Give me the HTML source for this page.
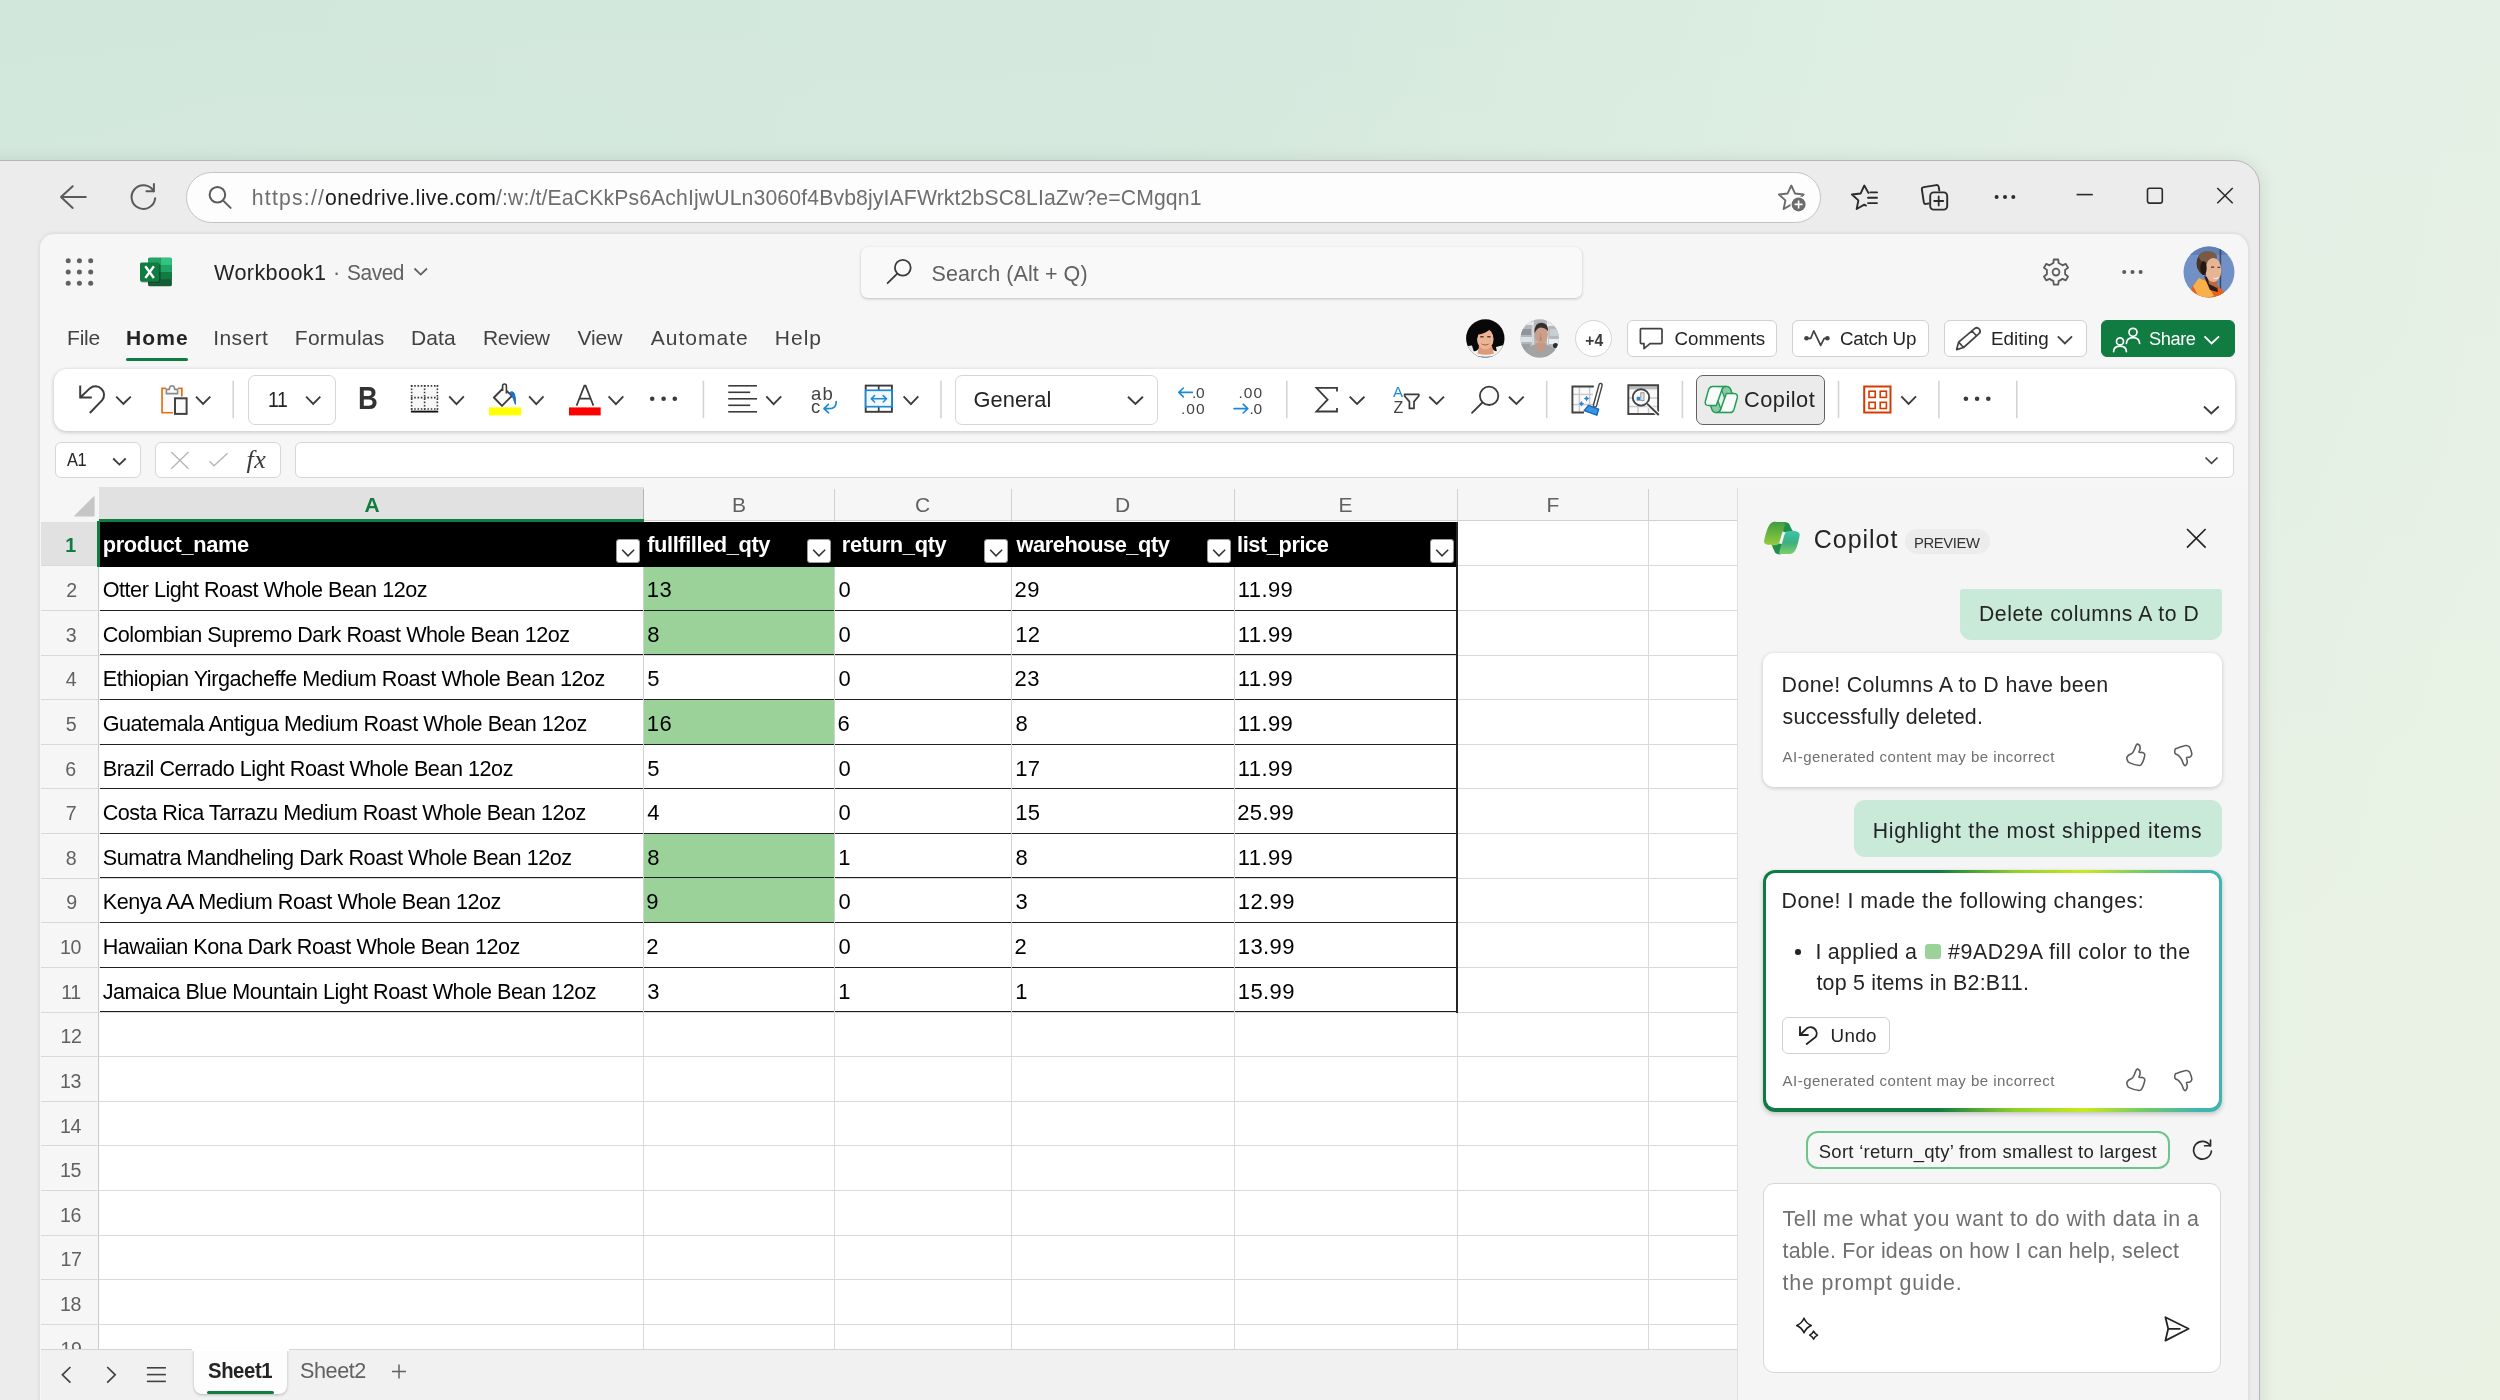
<!DOCTYPE html>
<html lang="en"><head><meta charset="utf-8"><title>Workbook1 - Excel</title><style>
html,body{margin:0;padding:0}
body{width:2500px;height:1400px;overflow:hidden;position:relative;font-family:"Liberation Sans","DejaVu Sans",sans-serif;
background:linear-gradient(180deg,rgba(238,244,226,0) 0%,rgba(238,244,226,.45) 100%),linear-gradient(100deg,#d2e7dc 0%,#d4e8dd 42%,#dcede1 66%,#e4f0e5 88%,#e7f1e6 100%);}
#root{position:absolute;left:0;top:0;width:2500px;height:1400px;will-change:transform}
.b{position:absolute;box-sizing:border-box}
.t{position:absolute;white-space:pre}
</style></head>
<body>
<div id="root">
<div class="b" style="left:-60px;top:160px;width:2320px;height:1320px;background:#ececec;border:1.5px solid #b6b6b6;border-radius:26px;box-shadow:0 2px 18px rgba(0,0,0,.10);"></div>
<div class="b" style="left:186px;top:171.5px;width:1635px;height:51px;background:#fdfdfd;border:1.5px solid #c4c4c4;border-radius:26px;"></div>
<span class="t" style="left:251.80px;top:184.00px;font-size:21.2px;line-height:27px;color:#6e6e6e;letter-spacing:1.213px;">https://</span>
<span class="t" style="left:325.10px;top:184.00px;font-size:21.2px;line-height:27px;color:#1b1b1b;letter-spacing:0.368px;">onedrive.live.com</span>
<span class="t" style="left:496.00px;top:184.00px;font-size:21.2px;line-height:27px;color:#6e6e6e;letter-spacing:0.133px;">/:w:/t/EaCKkPs6AchIjwULn3060f4Bvb8jyIAFWrkt2bSC8LIaZw?e=CMgqn1</span>
<div class="b" style="left:40px;top:234px;width:2207.5px;height:1200px;background:#f6f6f6;border-radius:14px 15px 0 0;box-shadow:0 0 4px rgba(0,0,0,.13);"></div>
<div class="b" style="left:860.5px;top:246.5px;width:721px;height:51px;background:#f9f9f9;border-radius:7px;box-shadow:0 1px 3px rgba(0,0,0,.22);"></div>
<span class="t" style="left:931.60px;top:260.00px;font-size:21.5px;line-height:28px;color:#616161;letter-spacing:0.082px;">Search (Alt + Q)</span>
<span class="t" style="left:214.00px;top:258.00px;font-size:21.6px;line-height:29px;color:#242424;letter-spacing:0.398px;">Workbook1</span>
<span class="t" style="left:333.00px;top:258.00px;font-size:21.6px;line-height:29px;color:#616161;">·</span>
<span class="t" style="left:346.50px;top:258.00px;font-size:21.6px;line-height:29px;color:#616161;letter-spacing:-0.450px;transform:scaleX(0.9672);transform-origin:0 50%;">Saved</span>
<span class="t" style="left:67.10px;top:324.00px;font-size:21px;line-height:27px;color:#424242;letter-spacing:-0.253px;">File</span>
<span class="t" style="left:126.00px;top:324.00px;font-size:21px;line-height:27px;color:#242424;letter-spacing:1.111px;font-weight:700;">Home</span>
<span class="t" style="left:213.20px;top:324.00px;font-size:21px;line-height:27px;color:#424242;letter-spacing:0.443px;">Insert</span>
<span class="t" style="left:294.80px;top:324.00px;font-size:21px;line-height:27px;color:#424242;letter-spacing:0.283px;">Formulas</span>
<span class="t" style="left:411.00px;top:324.00px;font-size:21px;line-height:27px;color:#424242;letter-spacing:0.107px;">Data</span>
<span class="t" style="left:483.10px;top:324.00px;font-size:21px;line-height:27px;color:#424242;letter-spacing:-0.398px;">Review</span>
<span class="t" style="left:577.40px;top:324.00px;font-size:21px;line-height:27px;color:#424242;letter-spacing:-0.057px;">View</span>
<span class="t" style="left:650.80px;top:324.00px;font-size:21px;line-height:27px;color:#424242;letter-spacing:1.013px;">Automate</span>
<span class="t" style="left:774.80px;top:324.00px;font-size:21px;line-height:27px;color:#424242;letter-spacing:0.997px;">Help</span>
<div class="b" style="left:126.2px;top:358px;width:61.6px;height:3.2px;background:#107c41;border-radius:2px;"></div>
<div class="b" style="left:1626.5px;top:320.3px;width:150.70000000000005px;height:37.2px;background:#fff;border:1.7px solid #d1d1d1;border-radius:6px;"></div>
<span class="t" style="left:1674.60px;top:326.00px;font-size:18.8px;line-height:25px;color:#242424;letter-spacing:-0.044px;">Comments</span>
<div class="b" style="left:1792.2px;top:320.3px;width:137.29999999999995px;height:37.2px;background:#fff;border:1.7px solid #d1d1d1;border-radius:6px;"></div>
<span class="t" style="left:1840.00px;top:326.00px;font-size:18.8px;line-height:25px;color:#242424;letter-spacing:-0.278px;">Catch Up</span>
<div class="b" style="left:1943.6px;top:320.3px;width:143.80000000000018px;height:37.2px;background:#fff;border:1.7px solid #d1d1d1;border-radius:6px;"></div>
<span class="t" style="left:1990.90px;top:326.00px;font-size:18.8px;line-height:25px;color:#242424;letter-spacing:0.070px;">Editing</span>
<div class="b" style="left:2100.5px;top:320.3px;width:134.0999999999999px;height:37.2px;background:#107c41;border:1.7px solid #107c41;border-radius:6px;"></div>
<span class="t" style="left:2149.00px;top:326.00px;font-size:18.8px;line-height:25px;color:#fff;letter-spacing:-0.450px;transform:scaleX(0.9713);transform-origin:0 50%;">Share</span>
<div class="b" style="left:1575.2px;top:319.8px;width:37.2px;height:37.2px;background:#fff;border:1.8px solid #d4d4d4;border-radius:50%;"></div>
<span class="t" style="left:1585.30px;top:330.00px;font-size:15.6px;line-height:21px;color:#3b3b3b;letter-spacing:0.093px;font-weight:700;">+4</span>
<div class="b" style="left:54px;top:368.5px;width:2180.5px;height:62.5px;background:#fff;border-radius:13px;box-shadow:0 1px 4px rgba(0,0,0,.22);"></div>
<div class="b" style="left:247.5px;top:374.6px;width:88.2px;height:50px;background:#fff;border:1.7px solid #d6d6d6;border-radius:7px;"></div>
<span class="t" style="left:267.69px;top:386.00px;font-size:21.4px;line-height:28px;color:#242424;letter-spacing:-0.450px;transform:scaleX(0.9064);transform-origin:0 50%;">11</span>
<span class="t" style="left:357.60px;top:379.00px;font-size:30.5px;line-height:38px;color:#333;font-weight:700;transform:scaleX(.9);transform-origin:0 0;">B</span>
<div class="b" style="left:955.4px;top:374.6px;width:202.8px;height:50px;background:#fff;border:1.7px solid #d6d6d6;border-radius:7px;"></div>
<span class="t" style="left:973.60px;top:385.00px;font-size:21.8px;line-height:29px;color:#242424;letter-spacing:0.033px;">General</span>
<div class="b" style="left:1696.2px;top:374.6px;width:128.7px;height:50px;background:#ebebeb;border:1.8px solid #616161;border-radius:7px;"></div>
<span class="t" style="left:1744.00px;top:385.00px;font-size:21.8px;line-height:29px;color:#242424;letter-spacing:0.484px;">Copilot</span>
<span class="t" style="left:811.00px;top:381.00px;font-size:18.5px;line-height:25px;color:#424242;letter-spacing:1.111px;">ab</span>
<span class="t" style="left:811.00px;top:394.00px;font-size:18.5px;line-height:25px;color:#424242;">c</span>
<span class="t" style="left:1192.00px;top:382.00px;font-size:15.5px;line-height:21px;color:#424242;letter-spacing:-0.306px;">.0</span>
<span class="t" style="left:1181.00px;top:398.00px;font-size:15.5px;line-height:21px;color:#424242;letter-spacing:1.037px;">.00</span>
<span class="t" style="left:1238.60px;top:382.00px;font-size:15.5px;line-height:21px;color:#424242;letter-spacing:0.937px;">.00</span>
<span class="t" style="left:1249.40px;top:398.00px;font-size:15.5px;line-height:21px;color:#424242;letter-spacing:-0.306px;">.0</span>
<span class="t" style="left:1392.90px;top:381.00px;font-size:15px;line-height:21px;color:#1e8ad6;">A</span>
<span class="t" style="left:1393.60px;top:397.00px;font-size:16px;line-height:21px;color:#424242;">Z</span>
<div class="b" style="left:54.5px;top:441.8px;width:86px;height:36.7px;background:#fff;border:1.7px solid #d6d6d6;border-radius:6px;"></div>
<span class="t" style="left:67.00px;top:447.00px;font-size:18.4px;line-height:25px;color:#242424;letter-spacing:-0.450px;transform:scaleX(0.8938);transform-origin:0 50%;">A1</span>
<div class="b" style="left:155px;top:441.8px;width:126px;height:36.7px;background:#fff;border:1.7px solid #d6d6d6;border-radius:6px;"></div>
<span class="t" style="left:246.50px;top:443.00px;font-size:26px;line-height:33px;color:#3b3b3b;font-family:'Liberation Serif','DejaVu Serif',serif;font-style:italic;letter-spacing:0.6px;">fx</span>
<div class="b" style="left:295.3px;top:441.8px;width:1939px;height:36.7px;background:#fff;border:1.7px solid #d6d6d6;border-radius:6px;"></div>
<div class="b" style="left:99px;top:521px;width:1638px;height:828px;background:#fff;"></div>
<div class="b" style="left:99px;top:487px;width:544.5px;height:33px;background:#e1e1e1;"></div>
<div class="b" style="left:40.5px;top:521.5px;width:57px;height:44.5px;background:#e1e1e1;"></div>
<div class="b" style="left:642.5px;top:489px;width:1.2px;height:32px;background:#b5b5b5;"></div>
<span class="t" style="left:364.60px;top:491.00px;font-size:21px;line-height:27px;color:#107c41;font-weight:700;">A</span>
<div class="b" style="left:833.5px;top:489px;width:1.2px;height:32px;background:#d0d0d0;"></div>
<span class="t" style="left:732.10px;top:491.00px;font-size:21px;line-height:27px;color:#616161;">B</span>
<div class="b" style="left:1010.5px;top:489px;width:1.2px;height:32px;background:#d0d0d0;"></div>
<span class="t" style="left:915.10px;top:491.00px;font-size:21px;line-height:27px;color:#616161;">C</span>
<div class="b" style="left:1233.5px;top:489px;width:1.2px;height:32px;background:#d0d0d0;"></div>
<span class="t" style="left:1115.10px;top:491.00px;font-size:21px;line-height:27px;color:#616161;">D</span>
<div class="b" style="left:1456.5px;top:489px;width:1.2px;height:32px;background:#d0d0d0;"></div>
<span class="t" style="left:1338.60px;top:491.00px;font-size:21px;line-height:27px;color:#616161;">E</span>
<div class="b" style="left:1647.5px;top:489px;width:1.2px;height:32px;background:#d0d0d0;"></div>
<span class="t" style="left:1546.60px;top:491.00px;font-size:21px;line-height:27px;color:#616161;">F</span>
<div class="b" style="left:1736.5px;top:489px;width:1.2px;height:32px;background:#d0d0d0;"></div>
<div class="b" style="left:643px;top:520.3px;width:1094px;height:1.2px;background:#d0d0d0;"></div>
<svg class="b" style="left:72px;top:494px;" width="24" height="24" viewBox="0 0 24 24" fill="none"><path d="M22.6 3.6 L22.6 21.2 Q22.6 22.6 21.2 22.6 L3.6 22.6 Q1.4 22.6 3 21 L21 3 Q22.6 1.4 22.6 3.6Z" fill="#c6c6c6"/></svg>
<div class="b" style="left:642.6px;top:521px;width:1.3px;height:828px;background:#dadada;"></div>
<div class="b" style="left:833.6px;top:521px;width:1.3px;height:828px;background:#dadada;"></div>
<div class="b" style="left:1010.6px;top:521px;width:1.3px;height:828px;background:#dadada;"></div>
<div class="b" style="left:1233.6px;top:521px;width:1.3px;height:828px;background:#dadada;"></div>
<div class="b" style="left:1456.6px;top:521px;width:1.3px;height:828px;background:#dadada;"></div>
<div class="b" style="left:1647.6px;top:521px;width:1.3px;height:828px;background:#dadada;"></div>
<div class="b" style="left:1736.6px;top:521px;width:1.3px;height:828px;background:#dadada;"></div>
<div class="b" style="left:98px;top:521px;width:1.2px;height:828px;background:#c9c9c9;"></div>
<div class="b" style="left:40.5px;top:565px;width:1696.5px;height:1.4px;background:#d9d9d9;"></div>
<div class="b" style="left:40.5px;top:610px;width:1696.5px;height:1.4px;background:#d9d9d9;"></div>
<div class="b" style="left:40.5px;top:655px;width:1696.5px;height:1.4px;background:#d9d9d9;"></div>
<div class="b" style="left:40.5px;top:699px;width:1696.5px;height:1.4px;background:#d9d9d9;"></div>
<div class="b" style="left:40.5px;top:744px;width:1696.5px;height:1.4px;background:#d9d9d9;"></div>
<div class="b" style="left:40.5px;top:788px;width:1696.5px;height:1.4px;background:#d9d9d9;"></div>
<div class="b" style="left:40.5px;top:833px;width:1696.5px;height:1.4px;background:#d9d9d9;"></div>
<div class="b" style="left:40.5px;top:878px;width:1696.5px;height:1.4px;background:#d9d9d9;"></div>
<div class="b" style="left:40.5px;top:922px;width:1696.5px;height:1.4px;background:#d9d9d9;"></div>
<div class="b" style="left:40.5px;top:967px;width:1696.5px;height:1.4px;background:#d9d9d9;"></div>
<div class="b" style="left:40.5px;top:1012px;width:1696.5px;height:1.4px;background:#d9d9d9;"></div>
<div class="b" style="left:40.5px;top:1056px;width:1696.5px;height:1.4px;background:#d9d9d9;"></div>
<div class="b" style="left:40.5px;top:1101px;width:1696.5px;height:1.4px;background:#d9d9d9;"></div>
<div class="b" style="left:40.5px;top:1145px;width:1696.5px;height:1.4px;background:#d9d9d9;"></div>
<div class="b" style="left:40.5px;top:1190px;width:1696.5px;height:1.4px;background:#d9d9d9;"></div>
<div class="b" style="left:40.5px;top:1235px;width:1696.5px;height:1.4px;background:#d9d9d9;"></div>
<div class="b" style="left:40.5px;top:1279px;width:1696.5px;height:1.4px;background:#d9d9d9;"></div>
<div class="b" style="left:40.5px;top:1324px;width:1696.5px;height:1.4px;background:#d9d9d9;"></div>
<span class="t" style="left:65.20px;top:532.00px;font-size:19.6px;line-height:26px;color:#107c41;font-weight:700;">1</span>
<span class="t" style="left:66.20px;top:577.00px;font-size:19.6px;line-height:26px;color:#616161;">2</span>
<span class="t" style="left:65.70px;top:622.00px;font-size:19.6px;line-height:26px;color:#616161;">3</span>
<span class="t" style="left:65.70px;top:666.00px;font-size:19.6px;line-height:26px;color:#616161;">4</span>
<span class="t" style="left:65.70px;top:711.00px;font-size:19.6px;line-height:26px;color:#616161;">5</span>
<span class="t" style="left:65.20px;top:756.00px;font-size:19.6px;line-height:26px;color:#616161;">6</span>
<span class="t" style="left:65.70px;top:800.00px;font-size:19.6px;line-height:26px;color:#616161;">7</span>
<span class="t" style="left:65.70px;top:845.00px;font-size:19.6px;line-height:26px;color:#616161;">8</span>
<span class="t" style="left:66.20px;top:889.00px;font-size:19.6px;line-height:26px;color:#616161;">9</span>
<span class="t" style="left:60.00px;top:934.00px;font-size:19.6px;line-height:26px;color:#616161;letter-spacing:-0.5px;">10</span>
<span class="t" style="left:61.23px;top:979.00px;font-size:19.6px;line-height:26px;color:#616161;letter-spacing:-0.5px;">11</span>
<span class="t" style="left:60.50px;top:1023.00px;font-size:19.6px;line-height:26px;color:#616161;letter-spacing:-0.5px;">12</span>
<span class="t" style="left:60.00px;top:1068.00px;font-size:19.6px;line-height:26px;color:#616161;letter-spacing:-0.5px;">13</span>
<span class="t" style="left:60.00px;top:1113.00px;font-size:19.6px;line-height:26px;color:#616161;letter-spacing:-0.5px;">14</span>
<span class="t" style="left:60.00px;top:1157.00px;font-size:19.6px;line-height:26px;color:#616161;letter-spacing:-0.5px;">15</span>
<span class="t" style="left:60.00px;top:1202.00px;font-size:19.6px;line-height:26px;color:#616161;letter-spacing:-0.5px;">16</span>
<span class="t" style="left:60.50px;top:1246.00px;font-size:19.6px;line-height:26px;color:#616161;letter-spacing:-0.5px;">17</span>
<span class="t" style="left:60.00px;top:1291.00px;font-size:19.6px;line-height:26px;color:#616161;letter-spacing:-0.5px;">18</span>
<span class="t" style="left:60.50px;top:1336.00px;font-size:19.6px;line-height:26px;color:#616161;letter-spacing:-0.5px;">19</span>
<div class="b" style="left:644px;top:566.2px;width:189.6px;height:44.62px;background:#9ad29a;"></div>
<div class="b" style="left:644px;top:610.8px;width:189.6px;height:44.62px;background:#9ad29a;"></div>
<div class="b" style="left:644px;top:700.1px;width:189.6px;height:44.62px;background:#9ad29a;"></div>
<div class="b" style="left:644px;top:833.9px;width:189.6px;height:44.62px;background:#9ad29a;"></div>
<div class="b" style="left:644px;top:878.6px;width:189.6px;height:44.62px;background:#9ad29a;"></div>
<div class="b" style="left:100px;top:521.6px;width:1358px;height:45px;background:#000;"></div>
<div class="b" style="left:100px;top:610px;width:1358px;height:1.45px;background:#1e1e1e;"></div>
<div class="b" style="left:100px;top:654px;width:1358px;height:1.45px;background:#1e1e1e;"></div>
<div class="b" style="left:100px;top:699px;width:1358px;height:1.45px;background:#1e1e1e;"></div>
<div class="b" style="left:100px;top:744px;width:1358px;height:1.45px;background:#1e1e1e;"></div>
<div class="b" style="left:100px;top:788px;width:1358px;height:1.45px;background:#1e1e1e;"></div>
<div class="b" style="left:100px;top:833px;width:1358px;height:1.45px;background:#1e1e1e;"></div>
<div class="b" style="left:100px;top:877px;width:1358px;height:1.45px;background:#1e1e1e;"></div>
<div class="b" style="left:100px;top:922px;width:1358px;height:1.45px;background:#1e1e1e;"></div>
<div class="b" style="left:100px;top:967px;width:1358px;height:1.45px;background:#1e1e1e;"></div>
<div class="b" style="left:100px;top:1011px;width:1358px;height:1.45px;background:#1e1e1e;"></div>
<div class="b" style="left:1456px;top:522px;width:1.7px;height:490.6px;background:#262626;"></div>
<div class="b" style="left:642.6px;top:567px;width:1.3px;height:446.22px;background:#d2d2d2;"></div>
<div class="b" style="left:833.6px;top:567px;width:1.3px;height:446.22px;background:#d2d2d2;"></div>
<div class="b" style="left:1010.6px;top:567px;width:1.3px;height:446.22px;background:#d2d2d2;"></div>
<div class="b" style="left:1233.6px;top:567px;width:1.3px;height:446.22px;background:#d2d2d2;"></div>
<div class="b" style="left:99px;top:519.2px;width:544.5px;height:3px;background:#107c41;"></div>
<div class="b" style="left:97px;top:521px;width:3.2px;height:45.6px;background:#107c41;"></div>
<span class="t" style="left:102.70px;top:530.00px;font-size:21.8px;line-height:29px;color:#fff;letter-spacing:-0.342px;font-weight:700;">product_name</span>
<span class="t" style="left:647.20px;top:530.00px;font-size:21.8px;line-height:29px;color:#fff;letter-spacing:-0.396px;font-weight:700;">fullfilled_qty</span>
<span class="t" style="left:841.80px;top:530.00px;font-size:21.8px;line-height:29px;color:#fff;letter-spacing:-0.319px;font-weight:700;">return_qty</span>
<span class="t" style="left:1016.60px;top:530.00px;font-size:21.8px;line-height:29px;color:#fff;letter-spacing:-0.455px;font-weight:700;">warehouse_qty</span>
<span class="t" style="left:1237.00px;top:530.00px;font-size:21.8px;line-height:29px;color:#fff;letter-spacing:-0.421px;font-weight:700;">list_price</span>
<span class="t" style="left:102.70px;top:575.00px;font-size:21.6px;line-height:29px;color:#000;letter-spacing:-0.462px;left:102.7px;">Otter Light Roast Whole Bean 12oz</span>
<span class="t" style="left:646.80px;top:575.00px;font-size:22.0px;line-height:29px;color:#000;letter-spacing:0.4px;">13</span>
<span class="t" style="left:838.60px;top:575.00px;font-size:22.0px;line-height:29px;color:#000;letter-spacing:0.4px;">0</span>
<span class="t" style="left:1014.60px;top:575.00px;font-size:22.0px;line-height:29px;color:#000;letter-spacing:0.4px;">29</span>
<span class="t" style="left:1237.80px;top:575.00px;font-size:22.0px;line-height:29px;color:#000;letter-spacing:0.4px;">11.99</span>
<span class="t" style="left:102.70px;top:620.00px;font-size:21.6px;line-height:29px;color:#000;letter-spacing:-0.462px;left:102.7px;">Colombian Supremo Dark Roast Whole Bean 12oz</span>
<span class="t" style="left:647.20px;top:620.00px;font-size:22.0px;line-height:29px;color:#000;letter-spacing:0.4px;">8</span>
<span class="t" style="left:838.60px;top:620.00px;font-size:22.0px;line-height:29px;color:#000;letter-spacing:0.4px;">0</span>
<span class="t" style="left:1015.20px;top:620.00px;font-size:22.0px;line-height:29px;color:#000;letter-spacing:0.4px;">12</span>
<span class="t" style="left:1237.80px;top:620.00px;font-size:22.0px;line-height:29px;color:#000;letter-spacing:0.4px;">11.99</span>
<span class="t" style="left:102.70px;top:664.00px;font-size:21.6px;line-height:29px;color:#000;letter-spacing:-0.462px;left:102.7px;">Ethiopian Yirgacheffe Medium Roast Whole Bean 12oz</span>
<span class="t" style="left:647.20px;top:664.00px;font-size:22.0px;line-height:29px;color:#000;letter-spacing:0.4px;">5</span>
<span class="t" style="left:838.60px;top:664.00px;font-size:22.0px;line-height:29px;color:#000;letter-spacing:0.4px;">0</span>
<span class="t" style="left:1014.60px;top:664.00px;font-size:22.0px;line-height:29px;color:#000;letter-spacing:0.4px;">23</span>
<span class="t" style="left:1237.80px;top:664.00px;font-size:22.0px;line-height:29px;color:#000;letter-spacing:0.4px;">11.99</span>
<span class="t" style="left:102.70px;top:709.00px;font-size:21.6px;line-height:29px;color:#000;letter-spacing:-0.462px;left:102.7px;">Guatemala Antigua Medium Roast Whole Bean 12oz</span>
<span class="t" style="left:646.80px;top:709.00px;font-size:22.0px;line-height:29px;color:#000;letter-spacing:0.4px;">16</span>
<span class="t" style="left:837.60px;top:709.00px;font-size:22.0px;line-height:29px;color:#000;letter-spacing:0.4px;">6</span>
<span class="t" style="left:1015.60px;top:709.00px;font-size:22.0px;line-height:29px;color:#000;letter-spacing:0.4px;">8</span>
<span class="t" style="left:1237.80px;top:709.00px;font-size:22.0px;line-height:29px;color:#000;letter-spacing:0.4px;">11.99</span>
<span class="t" style="left:102.70px;top:754.00px;font-size:21.6px;line-height:29px;color:#000;letter-spacing:-0.462px;left:102.7px;">Brazil Cerrado Light Roast Whole Bean 12oz</span>
<span class="t" style="left:647.20px;top:754.00px;font-size:22.0px;line-height:29px;color:#000;letter-spacing:0.4px;">5</span>
<span class="t" style="left:838.60px;top:754.00px;font-size:22.0px;line-height:29px;color:#000;letter-spacing:0.4px;">0</span>
<span class="t" style="left:1015.20px;top:754.00px;font-size:22.0px;line-height:29px;color:#000;letter-spacing:0.4px;">17</span>
<span class="t" style="left:1237.80px;top:754.00px;font-size:22.0px;line-height:29px;color:#000;letter-spacing:0.4px;">11.99</span>
<span class="t" style="left:102.70px;top:798.00px;font-size:21.6px;line-height:29px;color:#000;letter-spacing:-0.462px;left:102.7px;">Costa Rica Tarrazu Medium Roast Whole Bean 12oz</span>
<span class="t" style="left:647.20px;top:798.00px;font-size:22.0px;line-height:29px;color:#000;letter-spacing:0.4px;">4</span>
<span class="t" style="left:838.60px;top:798.00px;font-size:22.0px;line-height:29px;color:#000;letter-spacing:0.4px;">0</span>
<span class="t" style="left:1015.20px;top:798.00px;font-size:22.0px;line-height:29px;color:#000;letter-spacing:0.4px;">15</span>
<span class="t" style="left:1237.20px;top:798.00px;font-size:22.0px;line-height:29px;color:#000;letter-spacing:0.4px;">25.99</span>
<span class="t" style="left:103.70px;top:843.00px;font-size:21.6px;line-height:29px;color:#000;letter-spacing:-0.462px;left:102.7px;">Sumatra Mandheling Dark Roast Whole Bean 12oz</span>
<span class="t" style="left:647.20px;top:843.00px;font-size:22.0px;line-height:29px;color:#000;letter-spacing:0.4px;">8</span>
<span class="t" style="left:838.20px;top:843.00px;font-size:22.0px;line-height:29px;color:#000;letter-spacing:0.4px;">1</span>
<span class="t" style="left:1015.60px;top:843.00px;font-size:22.0px;line-height:29px;color:#000;letter-spacing:0.4px;">8</span>
<span class="t" style="left:1237.80px;top:843.00px;font-size:22.0px;line-height:29px;color:#000;letter-spacing:0.4px;">11.99</span>
<span class="t" style="left:102.70px;top:887.00px;font-size:21.6px;line-height:29px;color:#000;letter-spacing:-0.462px;left:102.7px;">Kenya AA Medium Roast Whole Bean 12oz</span>
<span class="t" style="left:646.20px;top:887.00px;font-size:22.0px;line-height:29px;color:#000;letter-spacing:0.4px;">9</span>
<span class="t" style="left:838.60px;top:887.00px;font-size:22.0px;line-height:29px;color:#000;letter-spacing:0.4px;">0</span>
<span class="t" style="left:1015.60px;top:887.00px;font-size:22.0px;line-height:29px;color:#000;letter-spacing:0.4px;">3</span>
<span class="t" style="left:1237.80px;top:887.00px;font-size:22.0px;line-height:29px;color:#000;letter-spacing:0.4px;">12.99</span>
<span class="t" style="left:102.70px;top:932.00px;font-size:21.6px;line-height:29px;color:#000;letter-spacing:-0.462px;left:102.7px;">Hawaiian Kona Dark Roast Whole Bean 12oz</span>
<span class="t" style="left:646.20px;top:932.00px;font-size:22.0px;line-height:29px;color:#000;letter-spacing:0.4px;">2</span>
<span class="t" style="left:838.60px;top:932.00px;font-size:22.0px;line-height:29px;color:#000;letter-spacing:0.4px;">0</span>
<span class="t" style="left:1014.60px;top:932.00px;font-size:22.0px;line-height:29px;color:#000;letter-spacing:0.4px;">2</span>
<span class="t" style="left:1237.80px;top:932.00px;font-size:22.0px;line-height:29px;color:#000;letter-spacing:0.4px;">13.99</span>
<span class="t" style="left:103.70px;top:977.00px;font-size:21.6px;line-height:29px;color:#000;letter-spacing:-0.462px;left:102.7px;">Jamaica Blue Mountain Light Roast Whole Bean 12oz</span>
<span class="t" style="left:647.20px;top:977.00px;font-size:22.0px;line-height:29px;color:#000;letter-spacing:0.4px;">3</span>
<span class="t" style="left:838.20px;top:977.00px;font-size:22.0px;line-height:29px;color:#000;letter-spacing:0.4px;">1</span>
<span class="t" style="left:1015.20px;top:977.00px;font-size:22.0px;line-height:29px;color:#000;letter-spacing:0.4px;">1</span>
<span class="t" style="left:1237.80px;top:977.00px;font-size:22.0px;line-height:29px;color:#000;letter-spacing:0.4px;">15.99</span>
<div class="b" style="left:616.2px;top:538.8px;width:24.2px;height:24.4px;background:#fff;border:1px solid #9a9a9a;border-radius:3px;"></div>
<svg class="b" style="left:616.2px;top:538.8px;" width="24.2" height="24.4" viewBox="0 0 24.2 24.4" fill="none"><path d="M6.2 10.8 L12 16.8 L18.2 10.8" stroke="#333" stroke-width="1.6" fill="none"/></svg>
<div class="b" style="left:807.2px;top:538.8px;width:24.2px;height:24.4px;background:#fff;border:1px solid #9a9a9a;border-radius:3px;"></div>
<svg class="b" style="left:807.2px;top:538.8px;" width="24.2" height="24.4" viewBox="0 0 24.2 24.4" fill="none"><path d="M6.2 10.8 L12 16.8 L18.2 10.8" stroke="#333" stroke-width="1.6" fill="none"/></svg>
<div class="b" style="left:984.2px;top:538.8px;width:24.2px;height:24.4px;background:#fff;border:1px solid #9a9a9a;border-radius:3px;"></div>
<svg class="b" style="left:984.2px;top:538.8px;" width="24.2" height="24.4" viewBox="0 0 24.2 24.4" fill="none"><path d="M6.2 10.8 L12 16.8 L18.2 10.8" stroke="#333" stroke-width="1.6" fill="none"/></svg>
<div class="b" style="left:1207.2px;top:538.8px;width:24.2px;height:24.4px;background:#fff;border:1px solid #9a9a9a;border-radius:3px;"></div>
<svg class="b" style="left:1207.2px;top:538.8px;" width="24.2" height="24.4" viewBox="0 0 24.2 24.4" fill="none"><path d="M6.2 10.8 L12 16.8 L18.2 10.8" stroke="#333" stroke-width="1.6" fill="none"/></svg>
<div class="b" style="left:1430.2px;top:538.8px;width:24.2px;height:24.4px;background:#fff;border:1px solid #9a9a9a;border-radius:3px;"></div>
<svg class="b" style="left:1430.2px;top:538.8px;" width="24.2" height="24.4" viewBox="0 0 24.2 24.4" fill="none"><path d="M6.2 10.8 L12 16.8 L18.2 10.8" stroke="#333" stroke-width="1.6" fill="none"/></svg>
<div class="b" style="left:40.5px;top:1349px;width:1696.5px;height:60px;background:#f1f1f1;border-top:1.3px solid #d4d4d4;"></div>
<div class="b" style="left:194px;top:1349px;width:92.5px;height:45px;background:#fdfdfd;border-radius:0 0 8px 8px;box-shadow:0 1px 3px rgba(0,0,0,.25);"></div>
<div class="b" style="left:192px;top:1347.5px;width:97px;height:3px;background:#fff;"></div>
<span class="t" style="left:207.70px;top:1356.00px;font-size:22px;line-height:29px;color:#242424;letter-spacing:-0.450px;font-weight:700;transform:scaleX(0.9231);transform-origin:0 50%;">Sheet1</span>
<div class="b" style="left:207.2px;top:1391px;width:66.8px;height:3px;background:#107c41;border-radius:2px;"></div>
<span class="t" style="left:299.52px;top:1356.00px;font-size:22px;line-height:29px;color:#616161;letter-spacing:-0.450px;transform:scaleX(0.9828);transform-origin:0 50%;">Sheet2</span>
<div class="b" style="left:1737px;top:488px;width:510.5px;height:950px;background:#f5f5f5;border-left:1.3px solid #dedede;"></div>
<span class="t" style="left:1813.80px;top:523.00px;font-size:25px;line-height:32px;color:#242424;letter-spacing:0.971px;">Copilot</span>
<div class="b" style="left:1905px;top:528.5px;width:85px;height:25.5px;background:#ececec;border-radius:13px;"></div>
<span class="t" style="left:1914.00px;top:533.00px;font-size:14.8px;line-height:20px;color:#333;letter-spacing:-0.379px;">PREVIEW</span>
<div class="b" style="left:1960.2px;top:589px;width:261.9px;height:50.8px;background:#c9e9d9;border-radius:3px 3px 11px 11px;"></div>
<span class="t" style="left:1979.00px;top:600.00px;font-size:21.2px;line-height:27px;color:#242424;letter-spacing:0.571px;">Delete columns A to D</span>
<div class="b" style="left:1762.8px;top:653px;width:459.3px;height:133.7px;background:#fff;border-radius:11px;box-shadow:0 1px 4px rgba(0,0,0,.2);"></div>
<span class="t" style="left:1781.60px;top:671.00px;font-size:21.4px;line-height:28px;color:#242424;letter-spacing:0.356px;">Done! Columns A to D have been</span>
<span class="t" style="left:1782.60px;top:703.00px;font-size:21.4px;line-height:28px;color:#242424;letter-spacing:0.144px;">successfully deleted.</span>
<span class="t" style="left:1782.60px;top:746.00px;font-size:15px;line-height:21px;color:#707070;letter-spacing:0.462px;">AI-generated content may be incorrect</span>
<div class="b" style="left:1853.6px;top:799.7px;width:368.5px;height:57.3px;background:#c9e9d9;border-radius:11px;"></div>
<span class="t" style="left:1872.70px;top:817.00px;font-size:21.2px;line-height:27px;color:#242424;letter-spacing:0.729px;">Highlight the most shipped items</span>
<div class="b" style="left:1762.8px;top:869.8px;width:459.3px;height:242px;border-radius:12px;background:linear-gradient(90deg,#0f7b41 0%,#0f7b41 38%,#8fd12a 55%,#c8ea1c 70%,#6cc86e 84%,#3fb5b0 95%);box-shadow:0 2px 5px rgba(0,0,0,.22);"></div>
<div class="b" style="left:1766.2px;top:873.2px;width:452.5px;height:235.2px;border-radius:9px;background:#fff;"></div>
<span class="t" style="left:1781.60px;top:887.00px;font-size:21.4px;line-height:28px;color:#242424;letter-spacing:0.471px;">Done! I made the following changes:</span>
<div class="b" style="left:1795.4px;top:949.2px;width:5.6px;height:5.6px;background:#242424;border-radius:50%;"></div>
<span class="t" style="left:1815.40px;top:938.00px;font-size:21.4px;line-height:28px;color:#242424;letter-spacing:0.278px;">I applied a</span>
<div class="b" style="left:1925.1px;top:943.5px;width:15.8px;height:15.2px;background:#9ad29a;border-radius:3px;"></div>
<span class="t" style="left:1948.00px;top:938.00px;font-size:21.4px;line-height:28px;color:#242424;letter-spacing:0.580px;">#9AD29A fill color to the</span>
<span class="t" style="left:1816.40px;top:969.00px;font-size:21.4px;line-height:28px;color:#242424;letter-spacing:0.232px;">top 5 items in B2:B11.</span>
<div class="b" style="left:1782.3px;top:1016.8px;width:107.3px;height:37.5px;background:#fff;border:1.4px solid #d1d1d1;border-radius:6px;"></div>
<span class="t" style="left:1830.60px;top:1023.00px;font-size:18.8px;line-height:25px;color:#242424;letter-spacing:0.349px;">Undo</span>
<span class="t" style="left:1782.60px;top:1070.00px;font-size:15px;line-height:21px;color:#707070;letter-spacing:0.462px;">AI-generated content may be incorrect</span>
<div class="b" style="left:1806px;top:1131.4px;width:364.4px;height:37.6px;background:#f7f7f7;border:2px solid #6dc58a;border-radius:12px;"></div>
<span class="t" style="left:1818.70px;top:1139.00px;font-size:18.5px;line-height:25px;color:#242424;letter-spacing:0.288px;">Sort ‘return_qty’ from smallest to largest</span>
<div class="b" style="left:1762.8px;top:1182.6px;width:458.4px;height:190px;background:#fff;border:1.8px solid #d6d6d6;border-radius:11px;"></div>
<span class="t" style="left:1782.60px;top:1205.00px;font-size:21.4px;line-height:28px;color:#707070;letter-spacing:0.496px;">Tell me what you want to do with data in a</span>
<span class="t" style="left:1782.60px;top:1237.00px;font-size:21.4px;line-height:28px;color:#707070;letter-spacing:0.181px;">table. For ideas on how I can help, select</span>
<span class="t" style="left:1782.60px;top:1269.00px;font-size:21.4px;line-height:28px;color:#707070;letter-spacing:0.792px;">the prompt guide.</span>
<svg class="b" style="left:0;top:0;pointer-events:none" width="2500" height="1400" viewBox="0 0 2500 1400" fill="none"><path d="M85.8 197.1H61.5M72.7 186.3L61 197.1L72.7 207.9" stroke="#5a5a5a" stroke-width="2" fill="none" stroke-linecap="round" stroke-linejoin="round"/><path d="M155.16 198.13A11.8 11.8 0 1 1 153.62 191.20" stroke="#5a5a5a" stroke-width="2" fill="none" stroke-linecap="round"/><path d="M153.92 184.00V191.20H146.42" stroke="#5a5a5a" stroke-width="2" fill="none" stroke-linecap="round" stroke-linejoin="round"/><circle cx="217.4" cy="194.8" r="7.8" fill="none" stroke="#5a5a5a" stroke-width="2"/><line x1="223.2" y1="200.6" x2="230.6" y2="207.9" stroke="#5a5a5a" stroke-width="2" stroke-linecap="round"/><path d="M1791.30 185.50L1794.94 193.48L1803.66 194.48L1797.20 200.42L1798.94 209.02L1791.30 204.70L1783.66 209.02L1785.40 200.42L1778.94 194.48L1787.66 193.48Z" stroke="#6b6b6b" stroke-width="1.9" fill="none" stroke-linejoin="round"/><circle cx="1798.6" cy="204.4" r="8.2" fill="#fff" stroke="none" stroke-width="0"/><circle cx="1798.6" cy="204.4" r="7" fill="#6b6b6b" stroke="none" stroke-width="0"/><path d="M1794.6 204.4H1802.6M1798.6 200.4V208.4" stroke="#fff" stroke-width="1.6" fill="none" /><path d="M1868.4 192.9L1864.3 185.5L1860.66 193.48L1851.94 194.48L1858.4 200.42L1856.66 209.02L1864.3 204.7L1866 205.6" stroke="#2b2b2b" stroke-width="1.9" fill="none" stroke-linejoin="round" stroke-linecap="round"/><line x1="1870.3" y1="192.4" x2="1877" y2="192.4" stroke="#2b2b2b" stroke-width="1.9" stroke-linecap="round"/><line x1="1868" y1="197.7" x2="1877" y2="197.7" stroke="#2b2b2b" stroke-width="1.9" stroke-linecap="round"/><line x1="1868" y1="203.1" x2="1877" y2="203.1" stroke="#2b2b2b" stroke-width="1.9" stroke-linecap="round"/><path d="M1928.5 203.5L1926.2 203.9Q1924.2 204.2 1923.8 202.2L1921.9 189.5Q1921.6 187.4 1923.7 187.1L1936.2 185.1Q1938.3 184.8 1938.7 186.9L1939.3 190.5" stroke="#2b2b2b" stroke-width="1.9" fill="none" stroke-linecap="round"/><rect x="1930.2" y="192.4" width="17" height="17.2" rx="3.5" fill="#ececec" stroke="#2b2b2b" stroke-width="1.9" /><path d="M1938.7 196.5V205.5M1934.2 201H1943.2" stroke="#2b2b2b" stroke-width="1.8" fill="none" stroke-linecap="round"/><circle cx="1996.6" cy="197.1" r="2" fill="#2b2b2b" stroke="none" stroke-width="0"/><circle cx="2005" cy="197.1" r="2" fill="#2b2b2b" stroke="none" stroke-width="0"/><circle cx="2013.3" cy="197.1" r="2" fill="#2b2b2b" stroke="none" stroke-width="0"/><line x1="2076.6" y1="194.6" x2="2092.8" y2="194.6" stroke="#2b2b2b" stroke-width="1.6" /><rect x="2147.5" y="188.3" width="14.8" height="14.8" rx="2" fill="none" stroke="#2b2b2b" stroke-width="1.6" /><path d="M2217.3 188L2232.7 203.3M2232.7 188L2217.3 203.3" stroke="#2b2b2b" stroke-width="1.6" fill="none" /><circle cx="68.2" cy="260.8" r="2.5" fill="#616161" stroke="none" stroke-width="0"/><circle cx="79.4" cy="260.8" r="2.5" fill="#616161" stroke="none" stroke-width="0"/><circle cx="90.7" cy="260.8" r="2.5" fill="#616161" stroke="none" stroke-width="0"/><circle cx="68.2" cy="272" r="2.5" fill="#616161" stroke="none" stroke-width="0"/><circle cx="79.4" cy="272" r="2.5" fill="#616161" stroke="none" stroke-width="0"/><circle cx="90.7" cy="272" r="2.5" fill="#616161" stroke="none" stroke-width="0"/><circle cx="68.2" cy="283.2" r="2.5" fill="#616161" stroke="none" stroke-width="0"/><circle cx="79.4" cy="283.2" r="2.5" fill="#616161" stroke="none" stroke-width="0"/><circle cx="90.7" cy="283.2" r="2.5" fill="#616161" stroke="none" stroke-width="0"/><rect x="148" y="257.8" width="23.9" height="28.4" rx="1.6" fill="#185c37" stroke="none" stroke-width="0" /><path d="M149.6 257.8H160.8V264.9H148V259.4Q148 257.8 149.6 257.8Z" fill="#21a366"/><path d="M160.8 257.8H170.3Q171.9 257.8 171.9 259.4V264.9H160.8Z" fill="#33c481"/><rect x="148" y="264.9" width="12.8" height="7.1" rx="0" fill="#107c41" stroke="none" stroke-width="0" /><rect x="160.8" y="264.9" width="11.1" height="7.1" rx="0" fill="#21a366" stroke="none" stroke-width="0" /><rect x="148" y="272" width="12.8" height="7.1" rx="0" fill="#185c37" stroke="none" stroke-width="0" /><rect x="160.8" y="272" width="11.1" height="7.1" rx="0" fill="#107c41" stroke="none" stroke-width="0" /><rect x="141" y="263.4" width="19.2" height="19.3" rx="1.6" fill="rgba(0,0,0,.25)" stroke="none" stroke-width="0" /><rect x="140" y="262.4" width="19.2" height="19.3" rx="1.6" fill="#107c41" stroke="none" stroke-width="0" /><path d="M145.3 266.2L153.9 278M153.9 266.2L145.3 278" stroke="#fff" stroke-width="2.3" fill="none" /><path d="M414.5 268.5L420.7 274.6L427 268.5" stroke="#616161" stroke-width="1.8" fill="none" /><circle cx="902.8" cy="267.8" r="7.9" fill="none" stroke="#3b3b3b" stroke-width="1.8"/><line x1="897" y1="273.9" x2="887.6" y2="283.2" stroke="#3b3b3b" stroke-width="1.8" stroke-linecap="round"/><path d="M2053.73 259.50L2058.27 259.50L2058.62 263.07L2062.51 265.32L2065.78 263.84L2068.04 267.76L2065.13 269.86L2065.13 274.34L2068.04 276.44L2065.78 280.36L2062.51 278.88L2058.62 281.13L2058.27 284.70L2053.73 284.70L2053.38 281.13L2049.49 278.88L2046.22 280.36L2043.96 276.44L2046.87 274.34L2046.87 269.86L2043.96 267.76L2046.22 263.84L2049.49 265.32L2053.38 263.07Z" stroke="#5a5a5a" stroke-width="1.8" fill="none" stroke-linejoin="round"/><circle cx="2056" cy="272.1" r="3.4" fill="none" stroke="#5a5a5a" stroke-width="1.8"/><circle cx="2124.2" cy="272" r="2" fill="#5a5a5a" stroke="none" stroke-width="0"/><circle cx="2132.5" cy="272" r="2" fill="#5a5a5a" stroke="none" stroke-width="0"/><circle cx="2140.6" cy="272" r="2" fill="#5a5a5a" stroke="none" stroke-width="0"/><clipPath id="av0"><circle cx="2209" cy="272" r="25.5"/></clipPath><g clip-path="url(#av0)"><rect x="2183" y="246" width="52" height="52" fill="#7090c6"/><rect x="2183" y="246" width="52" height="9" fill="#5f7fb5"/><rect x="2219.6" y="246" width="1.6" height="52" fill="#3b4a6b"/><path d="M2189 298L2193 285L2201 279L2214 282L2224 292L2226 298Z" fill="#e8611a"/><path d="M2193 286L2199 278L2206 281L2214 296L2206 298L2199 297Z" fill="#f9b04a"/><path d="M2204 276L2216 280L2218 292L2210 290Z" fill="#2a1c18"/><path d="M2206 270L2218 274L2217 288L2209 284Z" fill="#b8693f"/><ellipse cx="2206.5" cy="263.5" rx="10" ry="12" fill="#4a3428"/><ellipse cx="2208" cy="257" rx="9" ry="6" fill="#7a5a44"/><ellipse cx="2213.3" cy="270" rx="8" ry="12" fill="#e6b594"/><ellipse cx="2203.5" cy="268" rx="3.2" ry="7" fill="#241814"/><path d="M2212 277.5Q2216 279.5 2219.5 276.5Q2217 281 2212 277.5Z" fill="#fff"/><rect x="2211" y="266.5" width="3.2" height="1.3" fill="#5a3a2a"/><rect x="2217.5" y="266.8" width="2.6" height="1.2" fill="#5a3a2a"/></g><clipPath id="av1"><circle cx="1485.3" cy="338.4" r="19.2"/></clipPath><g clip-path="url(#av1)"><rect x="1465" y="318" width="41" height="41" fill="#080808"/><path d="M1465 346.5L1472 345.5L1474 352L1465 353Z" fill="#e8e8e6"/><path d="M1496 347L1506 344.5V352L1497 352.5Z" fill="#f2f2f0"/><path d="M1465 352.5L1476 351L1480 348H1491L1495 351L1506 352V359H1465Z" fill="#f4f1ee"/><path d="M1479 346L1492 346L1494 353.5Q1485.5 356 1477.5 353.5Z" fill="#dc9a78"/><path d="M1470 354.8Q1485.5 358.5 1501 354.8V356.2Q1485.5 360 1470 356.2Z" fill="#5a70a8"/><ellipse cx="1485.3" cy="339" rx="8.3" ry="10.6" fill="#e9b595"/><path d="M1476.6 341Q1474.5 326 1486 325.5Q1497 326 1494.4 341Q1493.6 333.5 1490 329.5Q1484 334 1478.4 334.5Q1477.2 337.5 1476.6 341Z" fill="#080808"/><path d="M1480.6 343.6Q1485.3 347.4 1490 343.6Q1485.3 345.2 1480.6 343.6Z" fill="#b4553f"/><rect x="1480.2" y="336.2" width="3.4" height="1.2" fill="#3a2018"/><rect x="1487.2" y="336.2" width="3.4" height="1.2" fill="#3a2018"/></g><clipPath id="av2"><circle cx="1539.7" cy="338.4" r="19.2"/></clipPath><g clip-path="url(#av2)"><rect x="1519" y="318" width="42" height="42" fill="#b4b8bb"/><rect x="1520" y="322" width="13" height="3" fill="#e4e7e9"/><rect x="1521" y="329" width="10" height="6" fill="#8e959a"/><rect x="1520" y="337" width="12" height="5" fill="#dde2e6"/><rect x="1521" y="344" width="9" height="7" fill="#9aa0a4"/><rect x="1548" y="321" width="12" height="5" fill="#e6e9eb"/><rect x="1550" y="329" width="10" height="7" fill="#c9ced2"/><rect x="1549" y="339" width="12" height="5" fill="#eceff1"/><circle cx="1555.5" cy="345.5" r="2.6" fill="#2e2e2e"/><rect x="1532.4" y="319" width="1.3" height="34" fill="#e9ecee"/><rect x="1547" y="319" width="1.3" height="30" fill="#e9ecee"/><path d="M1521 359L1524 350L1534 344.5H1547L1555 349L1559 359Z" fill="#a3a3a3"/><path d="M1535.5 343L1546 343L1543 352L1538.5 352Z" fill="#c49882"/><ellipse cx="1541.3" cy="334.5" rx="6.6" ry="9.2" fill="#caa08b"/><path d="M1534.6 333.5Q1533.6 322.6 1541.6 322.8Q1548.6 323.4 1548 331.5Q1546 327.8 1541 327.4Q1536.4 328 1534.6 333.5Z" fill="#35302e"/><path d="M1540.2 332L1542 340.6L1539.6 341Z" fill="#b78670"/></g><path d="M1641.4 328.7H1661Q1662 328.7 1662 329.7V342.6Q1662 343.6 1661 343.6H1650L1644 348.6V343.6H1641.4Q1640.4 343.6 1640.4 342.6V329.7Q1640.4 328.7 1641.4 328.7Z" stroke="#424242" stroke-width="1.7" fill="none" stroke-linejoin="round"/><path d="M1807 338.3L1810.8 338.3L1813.8 330.8L1820.7 345.4L1824.2 338.3L1826.5 338.3" stroke="#424242" stroke-width="1.7" fill="none" stroke-linejoin="round" stroke-linecap="round"/><circle cx="1806.5" cy="338.3" r="2.3" fill="#424242" stroke="none" stroke-width="0"/><circle cx="1827.4" cy="338.3" r="2.3" fill="#424242" stroke="none" stroke-width="0"/><path d="M1956.6 349.6L1958.6 342.2L1974.6 328.6Q1977 326.7 1979.2 329Q1981.3 331.4 1979 333.6L1963.6 347.5Z M1958.6 342.2L1963.6 347.5 M1972 331L1976.6 336" stroke="#424242" stroke-width="1.7" fill="none" stroke-linejoin="round"/><path d="M2057.9 336.3L2064.9 343.5L2072 336.3" stroke="#424242" stroke-width="1.8" fill="none" /><circle cx="2133" cy="332.3" r="4" fill="none" stroke="#fff" stroke-width="1.7"/><path d="M2126.4 343.4Q2126.6 337.6 2133 337.6Q2139.4 337.6 2139.6 343.4" stroke="#fff" stroke-width="1.7" fill="none" stroke-linecap="round"/><circle cx="2120" cy="341.4" r="3.5" fill="none" stroke="#fff" stroke-width="1.7"/><path d="M2113.6 351.6Q2113.8 346.2 2120 346.2Q2126.2 346.2 2126.4 351.6" stroke="#fff" stroke-width="1.7" fill="none" stroke-linecap="round"/><path d="M2204.5 336.3L2211.6 343.5L2219 336.3" stroke="#fff" stroke-width="1.8" fill="none" /><path d="M80.2 385.40V397.6H91.80M80.80 397.00L89.80 388.40A8.60 8.60 0 0 1 102.20 400.20L89.80 413.00" stroke="#3b3b3b" stroke-width="2" fill="none" stroke-linejoin="miter" stroke-linecap="butt"/><path d="M116.2 396.6L123.4 403.8L130.8 396.6" stroke="#3b3b3b" stroke-width="1.9" fill="none" /><path d="M166 388.6H162.2V412.6H173" stroke="#e8710a" stroke-width="2" fill="none" /><path d="M178 388.6H181.7V396.5" stroke="#e8710a" stroke-width="2" fill="none" /><rect x="162.9" y="389.3" width="18" height="22.6" rx="0" fill="#fafafa" stroke="none" stroke-width="0" /><path d="M166.4 393.6V389.4H169.2Q169.6 385.8 172 385.8Q174.4 385.8 174.8 389.4H177.6V393.6Z" stroke="#8a8a8a" stroke-width="1.6" fill="#fafafa" /><rect x="175" y="398.3" width="11.6" height="15.6" rx="0" fill="#fafafa" stroke="#424242" stroke-width="2" /><path d="M196 396.6L203.1 403.8L210.3 396.6" stroke="#3b3b3b" stroke-width="1.9" fill="none" /><line x1="233.2" y1="380.8" x2="233.2" y2="418.2" stroke="#d4d4d4" stroke-width="1.6" /><line x1="703.4" y1="380.8" x2="703.4" y2="418.2" stroke="#d4d4d4" stroke-width="1.6" /><line x1="941" y1="380.8" x2="941" y2="418.2" stroke="#d4d4d4" stroke-width="1.6" /><line x1="1286.8" y1="380.8" x2="1286.8" y2="418.2" stroke="#d4d4d4" stroke-width="1.6" /><line x1="1546.7" y1="380.8" x2="1546.7" y2="418.2" stroke="#d4d4d4" stroke-width="1.6" /><line x1="1682.4" y1="380.8" x2="1682.4" y2="418.2" stroke="#d4d4d4" stroke-width="1.6" /><line x1="1838.5" y1="380.8" x2="1838.5" y2="418.2" stroke="#d4d4d4" stroke-width="1.6" /><line x1="1938.9" y1="380.8" x2="1938.9" y2="418.2" stroke="#d4d4d4" stroke-width="1.6" /><line x1="2016.8" y1="380.8" x2="2016.8" y2="418.2" stroke="#d4d4d4" stroke-width="1.6" /><path d="M306.1 396.6L313.2 403.8L320.3 396.6" stroke="#3b3b3b" stroke-width="1.9" fill="none" /><rect x="411.5" y="386" width="26" height="23" rx="0" fill="#f7f7f7" stroke="none" stroke-width="0" /><line x1="410.9" y1="385.9" x2="438.2" y2="385.9" stroke="#3b3b3b" stroke-width="1.6" stroke-dasharray="1.6 1.7"/><line x1="410.9" y1="397.6" x2="438.2" y2="397.6" stroke="#3b3b3b" stroke-width="1.6" stroke-dasharray="1.6 1.7"/><line x1="410.9" y1="409.0" x2="438.2" y2="409.0" stroke="#3b3b3b" stroke-width="1.6" stroke-dasharray="1.6 1.7"/><line x1="411.6" y1="385.1" x2="411.6" y2="409.8" stroke="#3b3b3b" stroke-width="1.6" stroke-dasharray="1.6 1.7"/><line x1="424.6" y1="385.1" x2="424.6" y2="409.8" stroke="#3b3b3b" stroke-width="1.6" stroke-dasharray="1.6 1.7"/><line x1="437.4" y1="385.1" x2="437.4" y2="409.8" stroke="#3b3b3b" stroke-width="1.6" stroke-dasharray="1.6 1.7"/><line x1="410.9" y1="411.6" x2="438.2" y2="411.6" stroke="#111" stroke-width="1.9" /><path d="M449.2 396.4L456.5 404.1L463.8 396.4" stroke="#3b3b3b" stroke-width="1.9" fill="none" /><path d="M493.9 397.5L503.4 388L512 395.8L502 405.8Z" stroke="#3b3b3b" stroke-width="1.8" fill="#fafafa" stroke-linejoin="round"/><path d="M502.6 391V386Q502.6 384 504.5 384Q506.4 384 506.4 386V393.5" stroke="#3b3b3b" stroke-width="1.6" fill="#fff" /><path d="M509.4 392.6Q512.5 390.6 514 393Q516 397 515.4 404.4Q513.5 399 512.4 396.4Q511.4 394.2 509.4 392.6Z" stroke="#1e6fc8" stroke-width="1" fill="#1e6fc8" /><rect x="489" y="407.4" width="32.2" height="8" rx="0" fill="#ffff00" stroke="none" stroke-width="0" /><path d="M529.1 396.4L536.3 404.1L543.5 396.4" stroke="#3b3b3b" stroke-width="1.9" fill="none" /><path d="M576.6 405.6L584.4 385.6H585.6L593.4 405.6M579.3 398.6H590.7" stroke="#3b3b3b" stroke-width="1.7" fill="none" /><rect x="569" y="407.4" width="31.7" height="8" rx="0" fill="#ff0000" stroke="none" stroke-width="0" /><path d="M608.6 396.4L615.9 404.1L623.3 396.4" stroke="#3b3b3b" stroke-width="1.9" fill="none" /><circle cx="652.2" cy="398.8" r="2.3" fill="#3b3b3b" stroke="none" stroke-width="0"/><circle cx="663.6" cy="398.8" r="2.3" fill="#3b3b3b" stroke="none" stroke-width="0"/><circle cx="674.8" cy="398.8" r="2.3" fill="#3b3b3b" stroke="none" stroke-width="0"/><line x1="728.2" y1="385.8" x2="757" y2="385.8" stroke="#3b3b3b" stroke-width="1.6" /><line x1="728.2" y1="392.3" x2="750.2" y2="392.3" stroke="#3b3b3b" stroke-width="1.6" /><line x1="728.2" y1="398.8" x2="757" y2="398.8" stroke="#3b3b3b" stroke-width="1.6" /><line x1="728.2" y1="405.3" x2="750.2" y2="405.3" stroke="#3b3b3b" stroke-width="1.6" /><line x1="728.2" y1="411.8" x2="757" y2="411.8" stroke="#3b3b3b" stroke-width="1.6" /><path d="M766.3 396.4L773.6 404.1L781.2 396.4" stroke="#3b3b3b" stroke-width="1.9" fill="none" /><path d="M836.2 401.6Q836.6 408.6 829 408.6H824.4M828.4 404.4L824 408.6L828.6 412.8" stroke="#1e8ad6" stroke-width="1.7" fill="none" stroke-linecap="round" stroke-linejoin="round"/><rect x="865.7" y="385.6" width="26.2" height="26.2" rx="0" fill="none" stroke="#3b3b3b" stroke-width="1.9" /><line x1="878.7" y1="385.6" x2="878.7" y2="411.8" stroke="#3b3b3b" stroke-width="1.7" /><rect x="865.7" y="390.3" width="26.2" height="16.4" rx="0" fill="#f3f8fd" stroke="#1e8ad6" stroke-width="1.7" /><path d="M871.4 398.8H886.4M874.6 395.6L871.2 398.8L874.6 402M883.2 395.6L886.6 398.8L883.2 402" stroke="#1e8ad6" stroke-width="1.5" fill="none" stroke-linecap="round" stroke-linejoin="round"/><path d="M903.6 396.4L910.9 404.1L918.3 396.4" stroke="#3b3b3b" stroke-width="1.9" fill="none" /><path d="M1128 396.7L1135.4 404L1142.9 396.7" stroke="#3b3b3b" stroke-width="1.9" fill="none" /><path d="M1192.4 392.4H1179M1183.4 388L1178.8 392.4L1183.4 396.8" stroke="#1e8ad6" stroke-width="1.6" fill="none" stroke-linecap="round" stroke-linejoin="round"/><path d="M1234 408.6H1247.6M1243.2 404.2L1247.8 408.6L1243.2 413" stroke="#1e8ad6" stroke-width="1.6" fill="none" stroke-linecap="round" stroke-linejoin="round"/><path d="M1337 391.4V387.9H1316.4L1327.6 399.7L1316.4 411.5H1337V408" stroke="#3b3b3b" stroke-width="1.8" fill="none" stroke-linejoin="miter"/><path d="M1349.7 396.7L1357 404L1364.4 396.7" stroke="#3b3b3b" stroke-width="1.9" fill="none" /><path d="M1404.6 394.4H1418.8V396L1414 401.6V408.4H1409.4V401.6L1404.6 396Z" stroke="#3b3b3b" stroke-width="1.7" fill="#fafafa" stroke-linejoin="round"/><path d="M1429.3 396.7L1436.7 404L1444 396.7" stroke="#3b3b3b" stroke-width="1.9" fill="none" /><circle cx="1489.1" cy="395.8" r="9.2" fill="#fafafa" stroke="#3b3b3b" stroke-width="1.8"/><line x1="1482.4" y1="402.5" x2="1472" y2="412.9" stroke="#3b3b3b" stroke-width="1.8" stroke-linecap="round"/><path d="M1509 396.7L1516.4 404L1523.7 396.7" stroke="#3b3b3b" stroke-width="1.9" fill="none" /><rect x="1572.4" y="386.5" width="20.4" height="26" rx="0" fill="#fafafa" stroke="none" stroke-width="0" /><line x1="1579.4" y1="386.5" x2="1579.4" y2="412.5" stroke="#c8c8c8" stroke-width="1.4" /><line x1="1589.6" y1="386.5" x2="1589.6" y2="412.5" stroke="#c8c8c8" stroke-width="1.4" /><line x1="1572.4" y1="394.4" x2="1593" y2="394.4" stroke="#c8c8c8" stroke-width="1.4" /><line x1="1572.4" y1="404.6" x2="1593" y2="404.6" stroke="#c8c8c8" stroke-width="1.4" /><path d="M1593.8 386.5H1572.4V412.5H1584" stroke="#424242" stroke-width="1.9" fill="none" /><path d="M1600.6 385L1595 405.4" stroke="#424242" stroke-width="4.6" fill="none" stroke-linecap="round"/><path d="M1600.6 385L1595 405.4" stroke="#fff" stroke-width="1.8" fill="none" stroke-linecap="round"/><path d="M1588.4 405.4L1598.6 409.2L1596.8 415.2L1584.2 410.6Z" stroke="#1565c0" stroke-width="1.4" fill="#3a96dd" stroke-linejoin="round"/><path d="M1586.6 395.8Q1587.384 397.81600000000003 1589.3999999999999 398.6Q1587.384 399.384 1586.6 401.40000000000003Q1585.8159999999998 399.384 1583.8 398.6Q1585.8159999999998 397.81600000000003 1586.6 395.8Z" fill="#2b88d8"/><path d="M1581.4 401.0Q1582.1840000000002 403.016 1584.2 403.8Q1582.1840000000002 404.584 1581.4 406.6Q1580.616 404.584 1578.6000000000001 403.8Q1580.616 403.016 1581.4 401.0Z" fill="#2b88d8"/><rect x="1628.3" y="385.2" width="29.8" height="28.8" rx="0" fill="#fafafa" stroke="none" stroke-width="0" /><rect x="1628.3" y="385.2" width="29.8" height="4.2" rx="0" fill="#bdbdbd" stroke="none" stroke-width="0" /><line x1="1628.3" y1="398" x2="1658" y2="398" stroke="#c8c8c8" stroke-width="1.4" /><line x1="1628.3" y1="406.5" x2="1658" y2="406.5" stroke="#c8c8c8" stroke-width="1.4" /><line x1="1638" y1="404" x2="1638" y2="414" stroke="#c8c8c8" stroke-width="1.4" /><line x1="1648.5" y1="404" x2="1648.5" y2="414" stroke="#c8c8c8" stroke-width="1.4" /><rect x="1628.3" y="385.2" width="29.8" height="28.8" rx="0" fill="none" stroke="#424242" stroke-width="1.9" /><circle cx="1641" cy="397.4" r="8.2" fill="#fff" stroke="#424242" stroke-width="1.9"/><rect x="1636.6" y="396.8" width="3.4" height="3.8" rx="0" fill="#2b88d8" stroke="none" stroke-width="0" /><rect x="1640.8" y="392.8" width="3.2" height="7.8" rx="0" fill="#e6e6e6" stroke="#8a8a8a" stroke-width="0.9" /><path d="M1647 403.6L1658.8 415" stroke="#fafafa" stroke-width="4.4" fill="none" /><path d="M1647 403.6L1658.8 415" stroke="#424242" stroke-width="2" fill="none" /><path d="M1712.6 386.4H1725.8Q1729.6 386.4 1730.8 390L1732 393.6 M1712.6 386.4Q1709.6 386.6 1708.6 389.6L1705.4 401Q1704.4 405.4 1708.6 405.6H1716.4L1721.6 390.4Q1722.8 386.6 1725.8 386.4" stroke="#1f9d55" stroke-width="1.5" fill="#fafafa" stroke-linejoin="round"/><path d="M1730 412.6H1716.8Q1713 412.6 1711.8 409L1710.8 405.6 M1730 412.6Q1733 412.4 1734 409.4L1737.2 398Q1738.2 393.6 1734 393.4H1726.2L1721 408.6Q1719.8 412.4 1716.8 412.6" stroke="#1f9d55" stroke-width="1.5" fill="#fafafa" stroke-linejoin="round"/><path d="M1721.8 390.2Q1723 386.6 1725.8 386.4Q1729.6 386.4 1730.8 390L1732 393.4H1726.2L1724.6 398Z" stroke="#1f9d55" stroke-width="1.2" fill="#8cc9a5" stroke-linejoin="round"/><path d="M1720.8 408.8Q1719.6 412.4 1716.8 412.6Q1713 412.6 1711.8 409L1710.8 405.6H1716.4L1718 401Z" stroke="#1f9d55" stroke-width="1.2" fill="#8cc9a5" stroke-linejoin="round"/><rect x="1864.2" y="386.5" width="26.3" height="26" rx="0" fill="none" stroke="#d83b01" stroke-width="2" /><rect x="1869" y="391.2" width="6.2" height="6.2" rx="0" fill="none" stroke="#d83b01" stroke-width="1.6" /><rect x="1869" y="402.3" width="6.2" height="6.2" rx="0" fill="none" stroke="#d83b01" stroke-width="1.6" /><rect x="1880.2" y="391.2" width="6.2" height="6.2" rx="0" fill="none" stroke="#d83b01" stroke-width="1.6" /><rect x="1880.2" y="402.3" width="6.2" height="6.2" rx="0" fill="none" stroke="#d83b01" stroke-width="1.6" /><path d="M1901.3 396.4L1908.6 404L1916 396.4" stroke="#3b3b3b" stroke-width="1.9" fill="none" /><circle cx="1965.9" cy="398.8" r="2.3" fill="#3b3b3b" stroke="none" stroke-width="0"/><circle cx="1977.1" cy="398.8" r="2.3" fill="#3b3b3b" stroke="none" stroke-width="0"/><circle cx="1988.3" cy="398.8" r="2.3" fill="#3b3b3b" stroke="none" stroke-width="0"/><path d="M2204 406.5L2211.3 413.4L2218.7 406.5" stroke="#3b3b3b" stroke-width="1.9" fill="none" /><path d="M113.2 458.5L119.4 464.6L125.7 458.5" stroke="#3b3b3b" stroke-width="1.8" fill="none" /><path d="M171.3 452L188.5 468.8M188.5 452L171.3 468.8" stroke="#b5b5b5" stroke-width="1.3" fill="none" /><path d="M209.5 461.2L214 465.8L227.5 453.2" stroke="#b5b5b5" stroke-width="1.3" fill="none" /><path d="M2205.5 457.5L2211.5 463.3L2217.5 457.5" stroke="#424242" stroke-width="1.7" fill="none" /><path d="M70.4 1367L62.4 1374.8L70.4 1382.7" stroke="#424242" stroke-width="1.7" fill="none" /><path d="M107.2 1367L115.2 1374.8L107.2 1382.7" stroke="#424242" stroke-width="1.7" fill="none" /><line x1="146.9" y1="1367.8" x2="165.9" y2="1367.8" stroke="#424242" stroke-width="1.6" /><line x1="146.9" y1="1374.6" x2="165.9" y2="1374.6" stroke="#424242" stroke-width="1.6" /><line x1="146.9" y1="1381.4" x2="165.9" y2="1381.4" stroke="#424242" stroke-width="1.6" /><path d="M392 1371.5H406M399 1364.5V1378.5" stroke="#616161" stroke-width="1.5" fill="none" /><defs><linearGradient id="cg1" x1="0" y1="0" x2="0" y2="1"><stop offset="0" stop-color="#3e9d42"/><stop offset="1" stop-color="#96cc3e"/></linearGradient><linearGradient id="cg2" x1="0" y1="0" x2="0" y2="1"><stop offset="0" stop-color="#3cc6ad"/><stop offset="0.5" stop-color="#3fae80"/><stop offset="1" stop-color="#7fcf6a"/></linearGradient></defs><path d="M1783.00 522.20C1784.08 521.40 1787.17 522.23 1788.50 523.20C1789.83 524.17 1790.33 526.53 1791.00 528.00C1791.67 529.47 1793.67 531.33 1792.50 532.00C1791.33 532.67 1785.75 532.67 1784.00 532.00C1782.25 531.33 1782.17 529.63 1782.00 528.00C1781.83 526.37 1781.92 523.00 1783.00 522.20Z" fill="#1f8f4d"/><path d="M1772.50 544.20C1773.83 543.23 1780.25 543.40 1782.00 544.20C1783.75 545.00 1783.17 547.37 1783.00 549.00C1782.83 550.63 1782.13 553.23 1781.00 554.00C1779.87 554.77 1777.37 554.27 1776.20 553.60C1775.03 552.93 1774.62 551.57 1774.00 550.00C1773.38 548.43 1771.17 545.17 1772.50 544.20Z" fill="#1f8f4d"/><path d="M1772.50 522.20C1774.50 521.28 1777.92 521.93 1780.00 522.00C1782.08 522.07 1784.25 521.85 1785.00 522.60C1785.75 523.35 1785.08 524.43 1784.50 526.50C1783.92 528.57 1782.42 532.25 1781.50 535.00C1780.58 537.75 1779.88 541.33 1779.00 543.00C1778.12 544.67 1778.03 544.70 1776.20 545.00C1774.37 545.30 1770.00 545.22 1768.00 544.80C1766.00 544.38 1764.70 543.80 1764.20 542.50C1763.70 541.20 1764.37 539.50 1765.00 537.00C1765.63 534.50 1766.75 529.97 1768.00 527.50C1769.25 525.03 1770.50 523.12 1772.50 522.20Z" fill="url(#cg1)"/><path d="M1788.00 531.20C1789.83 530.82 1794.08 530.73 1796.00 531.20C1797.92 531.67 1799.03 532.62 1799.50 534.00C1799.97 535.38 1799.38 537.00 1798.80 539.50C1798.22 542.00 1797.13 546.65 1796.00 549.00C1794.87 551.35 1794.00 552.77 1792.00 553.60C1790.00 554.43 1786.08 553.97 1784.00 554.00C1781.92 554.03 1780.17 554.55 1779.50 553.80C1778.83 553.05 1779.42 551.80 1780.00 549.50C1780.58 547.20 1782.17 542.67 1783.00 540.00C1783.83 537.33 1784.17 534.97 1785.00 533.50C1785.83 532.03 1786.17 531.58 1788.00 531.20Z" fill="url(#cg2)"/><path d="M2187 529L2205.6 547.6M2205.6 529L2187 547.6" stroke="#242424" stroke-width="1.7" fill="none" /><path d="M2137.60 744.12C2138.20 744.22 2139.40 744.92 2139.80 745.80C2140.20 746.68 2140.13 748.32 2140.00 749.40C2139.87 750.48 2138.60 751.77 2139.00 752.28C2139.40 752.79 2141.45 752.16 2142.40 752.48C2143.35 752.80 2144.44 753.25 2144.72 754.20C2145.00 755.15 2144.53 756.67 2144.08 758.20C2143.63 759.73 2142.81 762.19 2142.00 763.40C2141.19 764.61 2141.33 765.61 2139.20 765.48C2137.07 765.35 2131.19 763.55 2129.20 762.60C2127.21 761.65 2127.67 760.67 2127.28 759.80C2126.89 758.93 2126.63 758.20 2126.88 757.40C2127.13 756.60 2127.88 755.73 2128.80 755.00C2129.72 754.27 2131.43 754.00 2132.40 753.00C2133.37 752.00 2133.97 750.30 2134.60 749.00C2135.23 747.70 2135.70 746.01 2136.20 745.20C2136.70 744.39 2137.00 744.02 2137.60 744.12Z" stroke="#5c5c5c" stroke-width="1.6" fill="none" stroke-linejoin="round"/><path d="M2185.80 745.48C2187.83 745.28 2188.51 746.08 2189.40 747.00C2190.29 747.92 2190.72 749.73 2191.12 751.00C2191.52 752.27 2192.02 753.59 2191.80 754.60C2191.58 755.61 2190.67 756.59 2189.80 757.08C2188.93 757.57 2187.02 756.80 2186.60 757.52C2186.18 758.24 2187.30 760.25 2187.28 761.40C2187.26 762.55 2186.86 763.70 2186.48 764.40C2186.10 765.10 2185.51 765.70 2185.00 765.60C2184.49 765.50 2183.97 764.83 2183.40 763.80C2182.83 762.77 2182.37 760.73 2181.60 759.40C2180.83 758.07 2179.80 756.73 2178.80 755.80C2177.80 754.87 2176.28 754.40 2175.60 753.80C2174.92 753.20 2174.77 752.97 2174.72 752.20C2174.67 751.43 2174.87 749.87 2175.28 749.20C2175.69 748.53 2175.45 748.82 2177.20 748.20C2178.95 747.58 2183.77 745.68 2185.80 745.48Z" stroke="#5c5c5c" stroke-width="1.6" fill="none" stroke-linejoin="round"/><path d="M2137.60 1069.12C2138.20 1069.22 2139.40 1069.92 2139.80 1070.80C2140.20 1071.68 2140.13 1073.32 2140.00 1074.40C2139.87 1075.48 2138.60 1076.77 2139.00 1077.28C2139.40 1077.79 2141.45 1077.16 2142.40 1077.48C2143.35 1077.80 2144.44 1078.25 2144.72 1079.20C2145.00 1080.15 2144.53 1081.67 2144.08 1083.20C2143.63 1084.73 2142.81 1087.19 2142.00 1088.40C2141.19 1089.61 2141.33 1090.61 2139.20 1090.48C2137.07 1090.35 2131.19 1088.55 2129.20 1087.60C2127.21 1086.65 2127.67 1085.67 2127.28 1084.80C2126.89 1083.93 2126.63 1083.20 2126.88 1082.40C2127.13 1081.60 2127.88 1080.73 2128.80 1080.00C2129.72 1079.27 2131.43 1079.00 2132.40 1078.00C2133.37 1077.00 2133.97 1075.30 2134.60 1074.00C2135.23 1072.70 2135.70 1071.01 2136.20 1070.20C2136.70 1069.39 2137.00 1069.02 2137.60 1069.12Z" stroke="#5c5c5c" stroke-width="1.6" fill="none" stroke-linejoin="round"/><path d="M2185.80 1070.48C2187.83 1070.28 2188.51 1071.08 2189.40 1072.00C2190.29 1072.92 2190.72 1074.73 2191.12 1076.00C2191.52 1077.27 2192.02 1078.59 2191.80 1079.60C2191.58 1080.61 2190.67 1081.59 2189.80 1082.08C2188.93 1082.57 2187.02 1081.80 2186.60 1082.52C2186.18 1083.24 2187.30 1085.25 2187.28 1086.40C2187.26 1087.55 2186.86 1088.70 2186.48 1089.40C2186.10 1090.10 2185.51 1090.70 2185.00 1090.60C2184.49 1090.50 2183.97 1089.83 2183.40 1088.80C2182.83 1087.77 2182.37 1085.73 2181.60 1084.40C2180.83 1083.07 2179.80 1081.73 2178.80 1080.80C2177.80 1079.87 2176.28 1079.40 2175.60 1078.80C2174.92 1078.20 2174.77 1077.97 2174.72 1077.20C2174.67 1076.43 2174.87 1074.87 2175.28 1074.20C2175.69 1073.53 2175.45 1073.82 2177.20 1073.20C2178.95 1072.58 2183.77 1070.68 2185.80 1070.48Z" stroke="#5c5c5c" stroke-width="1.6" fill="none" stroke-linejoin="round"/><path d="M1800 1026.30V1035H1808.60M1800.50 1034.50L1806.60 1028.60A6.2 6.2 0 0 1 1815.40 1037.20L1806.10 1044.50" stroke="#242424" stroke-width="1.9" fill="none" /><path d="M2211.37 1150.98A8.9 8.9 0 1 1 2210.21 1145.75" stroke="#2b2b2b" stroke-width="1.7" fill="none" stroke-linecap="round"/><path d="M2210.51 1140.15V1145.75H2204.61" stroke="#2b2b2b" stroke-width="1.7" fill="none" stroke-linecap="round" stroke-linejoin="round"/><path d="M1804 1318.2Q1806.19 1323.31 1811.3 1325.5Q1806.19 1327.69 1804 1332.8Q1801.81 1327.69 1796.7 1325.5Q1801.81 1323.31 1804 1318.2Z" stroke="#1f1f1f" stroke-width="1.6" fill="none" stroke-linejoin="round"/><path d="M1813.6 1331.1Q1814.8 1333.8999999999999 1817.6 1335.1Q1814.8 1336.3 1813.6 1339.1Q1812.3999999999999 1336.3 1809.6 1335.1Q1812.3999999999999 1333.8999999999999 1813.6 1331.1Z" stroke="#1f1f1f" stroke-width="1.5" fill="none" stroke-linejoin="round"/><path d="M2165.4 1317.2L2188.6 1328.8L2165.4 1340.6L2168.2 1328.8ZM2168.2 1328.8H2179.8" stroke="#242424" stroke-width="1.8" fill="none" stroke-linejoin="round" stroke-linecap="round"/></svg>
</div>
</body></html>
